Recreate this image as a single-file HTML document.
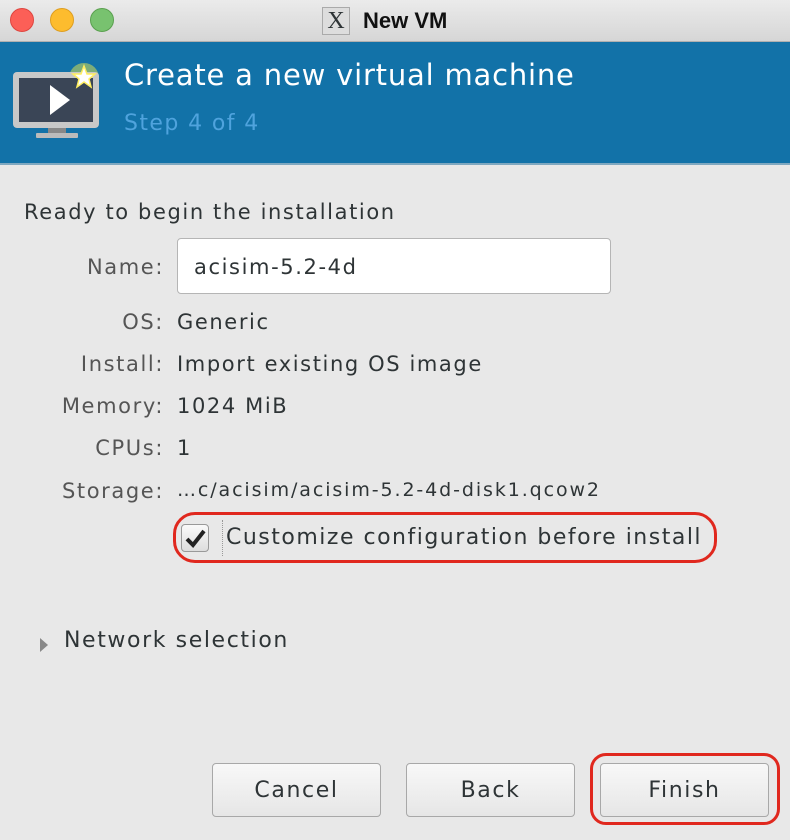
<!DOCTYPE html>
<html><head><style>
body{margin:0;width:790px;height:840px;background:#e8e8e8;font-family:"DejaVu Sans","Liberation Sans",sans-serif;position:relative;overflow:hidden;color:#2e3436;letter-spacing:1.6px}
.a{position:absolute;white-space:nowrap}
.tb{position:absolute;left:0;top:0;width:790px;height:41px;background:linear-gradient(#ebebeb,#d6d6d6);border-bottom:1px solid #b0b0b0;letter-spacing:0}
.dot{position:absolute;top:8px;width:24px;height:24px;border-radius:50%}
.hdr{position:absolute;left:0;top:42px;width:790px;height:121px;background:#1272a8;border-bottom:2px solid #7fa8c0}
.lbl{position:absolute;right:626px;font-size:21px;color:#555}
.val{position:absolute;left:177px;font-size:21px;color:#2e3436}
.btn{position:absolute;top:763px;width:167px;height:52px;border:1px solid #a8a8a8;border-radius:4px;background:linear-gradient(#f8f8f8,#e6e6e6);font-size:22px;text-align:center;line-height:54px;color:#2e3436}
</style></head><body>
<div class="tb">
<div class="dot" style="left:10px;background:#fc5f57;border:1px solid #de4640;width:22px;height:22px"></div>
<div class="dot" style="left:50px;background:#fdbc2e;border:1px solid #de9e20;width:22px;height:22px"></div>
<div class="dot" style="left:90px;background:#78c26f;border:1px solid #5aa04f;width:22px;height:22px"></div>
<div class="a" style="left:322px;top:7px;width:26px;height:26px;background:#ddd;border:1px solid #aaa;font-family:'Liberation Serif',serif;font-size:24px;line-height:26px;text-align:center">X</div>
<div class="a" style="left:363px;top:8px;font-size:22px;font-weight:bold;color:#111;font-family:'Liberation Sans',sans-serif">New VM</div>
</div>
<div class="hdr">
<svg class="a" style="left:10px;top:16px" width="92" height="82" viewBox="0 0 92 82">
<circle cx="74" cy="20" r="15" fill="#e8e84a" opacity=".5"/>
<rect x="3" y="14" width="86" height="56" rx="4" fill="#c8c8c8"/>
<rect x="9" y="20" width="74" height="44" fill="#3a4556"/>
<polygon points="40,27 40,57 60,42" fill="#fff"/>
<rect x="38" y="70" width="18" height="5" fill="#888"/>
<rect x="26" y="75" width="42" height="5" rx="1" fill="#bbb"/>
<polygon points="74,8 77,16 85,16 79,21 81,29 74,24 67,29 69,21 63,16 71,16" fill="#fff" stroke="#ffef60" stroke-width="1.5"/>
</svg>
<div class="a" style="left:124px;top:16px;font-size:29px;color:#fff;letter-spacing:.8px">Create a new virtual machine</div>
<div class="a" style="left:124px;top:69px;font-size:22px;color:#4fa3dd;letter-spacing:1.4px">Step 4 of 4</div>
</div>
<div class="a" style="left:24px;top:200px;font-size:21px">Ready to begin the installation</div>
<div class="lbl" style="top:255px">Name:</div>
<div class="a" style="left:177px;top:238px;width:432px;height:54px;border:1px solid #b5b5b5;border-radius:4px;background:#fff"></div>
<div class="val" style="left:194px;top:255px">acisim-5.2-4d</div>
<div class="lbl" style="top:310px">OS:</div><div class="val" style="top:310px">Generic</div>
<div class="lbl" style="top:352px">Install:</div><div class="val" style="top:352px">Import existing OS image</div>
<div class="lbl" style="top:394px">Memory:</div><div class="val" style="top:394px">1024 MiB</div>
<div class="lbl" style="top:436px">CPUs:</div><div class="val" style="top:436px">1</div>
<div class="lbl" style="top:479px">Storage:</div><div class="val" style="top:479px;font-size:19px;letter-spacing:1.9px">…c/acisim/acisim-5.2-4d-disk1.qcow2</div>
<div class="a" style="left:173px;top:512px;width:538px;height:45px;border:3px solid #e0281e;border-radius:22px"></div>
<div class="a" style="left:181px;top:524px;width:26px;height:26px;border:1px solid #999;border-radius:4px;background:linear-gradient(#fafafa,#ddd)"></div>
<svg class="a" style="left:183px;top:526px" width="24" height="24"><path d="M4 13 L10 19 L21 5" fill="none" stroke="#222" stroke-width="4"/></svg>
<div class="a" style="left:222px;top:520px;height:36px;border-left:1px dotted #999;padding-left:3px;font-size:22px;line-height:36px;color:#2e3436;letter-spacing:1.5px">Customize configuration before install</div>
<div class="a" style="left:40px;top:638px;width:0;height:0;border-left:8px solid #888;border-top:7px solid transparent;border-bottom:7px solid transparent"></div>
<div class="a" style="left:64px;top:628px;font-size:22px">Network selection</div>
<div class="btn" style="left:212px">Cancel</div>
<div class="btn" style="left:406px">Back</div>
<div class="btn" style="left:600px">Finish</div>
<div class="a" style="left:590px;top:753px;width:184px;height:66px;border:3px solid #e0281e;border-radius:16px"></div>
</body></html>
